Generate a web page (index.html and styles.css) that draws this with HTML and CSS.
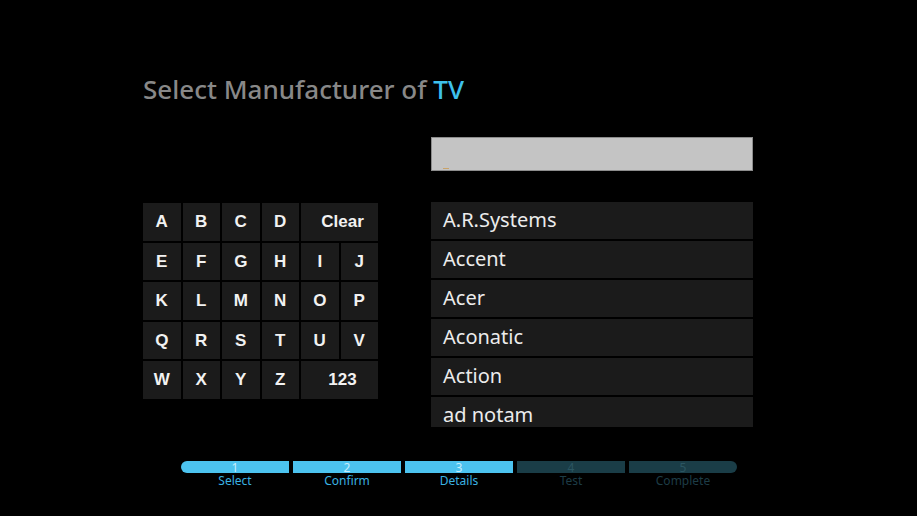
FILE: index.html
```html
<!DOCTYPE html>
<html>
<head>
<meta charset="utf-8">
<link rel="stylesheet" href="styles.css">
</head>
<body>
<div class="screen">
  <h1 class="title">Select Manufacturer of <span class="accent">TV</span></h1>
  <div class="main">
    <div class="keyboard">
      <div class="key">A</div><div class="key">B</div><div class="key">C</div><div class="key">D</div><div class="key wide">Clear</div>
      <div class="key">E</div><div class="key">F</div><div class="key">G</div><div class="key">H</div><div class="key">I</div><div class="key">J</div>
      <div class="key">K</div><div class="key">L</div><div class="key">M</div><div class="key">N</div><div class="key">O</div><div class="key">P</div>
      <div class="key">Q</div><div class="key">R</div><div class="key">S</div><div class="key">T</div><div class="key">U</div><div class="key">V</div>
      <div class="key">W</div><div class="key">X</div><div class="key">Y</div><div class="key">Z</div><div class="key wide">123</div>
    </div>
    <div class="right">
      <div class="search"><span class="caret"></span></div>
      <div class="list">
        <div class="item">A.R.Systems</div>
        <div class="item">Accent</div>
        <div class="item">Acer</div>
        <div class="item">Aconatic</div>
        <div class="item">Action</div>
        <div class="item">ad notam</div>
      </div>
    </div>
  </div>
  <div class="steps">
    <div class="step done first"><div class="bar">1</div><div class="label">Select</div></div>
    <div class="step done"><div class="bar">2</div><div class="label">Confirm</div></div>
    <div class="step done"><div class="bar">3</div><div class="label">Details</div></div>
    <div class="step"><div class="bar">4</div><div class="label">Test</div></div>
    <div class="step last"><div class="bar">5</div><div class="label">Complete</div></div>
  </div>
</div>
</body>
</html>
```

FILE: styles.css
```css
html, body {
  margin: 0;
  padding: 0;
  background: #000;
}
.screen {
  width: 917px;
  height: 516px;
  box-sizing: border-box;
  padding: 70px 0 0 143px;
  font-family: "Noto Sans", "Open Sans", sans-serif;
  overflow: hidden;
}
.title {
  margin: 0;
  font-size: 26px;
  line-height: 38px;
  font-weight: 500;
  color: #888888;
  height: 38px;
}
.accent {
  color: #3ec0ec;
}
.main {
  display: flex;
  align-items: flex-start;
  margin-top: 29px;
}
.keyboard {
  display: grid;
  grid-template-columns: repeat(6, 37.5px);
  grid-auto-rows: 37.5px;
  gap: 2px;
  margin-top: 66px;
  font-family: "Liberation Sans", Arial, sans-serif;
  font-weight: bold;
  font-size: 17px;
  color: #f2f2f2;
}
.key {
  background: #1b1b1b;
  display: flex;
  align-items: center;
  justify-content: center;
  padding-top: 1px;
}
.key.wide {
  grid-column: span 2;
  padding-left: 6px;
}
.right {
  margin-left: 53px;
  width: 322px;
}
.search {
  height: 32px;
  background: #c4c4c4;
  border: 1px solid #8c8c8c;
  position: relative;
}
.caret {
  position: absolute;
  left: 11px;
  bottom: 1px;
  width: 6px;
  height: 1px;
  background: #c9a36a;
}
.list {
  margin-top: 31px;
  height: 225px;
  overflow: hidden;
  display: flex;
  flex-direction: column;
  gap: 2px;
}
.item {
  flex: none;
  height: 37px;
  background: #1b1b1b;
  color: #ececec;
  font-size: 20px;
  line-height: 35px;
  padding-left: 12px;
}
.steps {
  display: flex;
  gap: 4px;
  margin: 34px 0 0 38px;
  width: 556px;
}
.step {
  width: 108px;
  text-align: center;
}
.bar {
  height: 12px;
  background: #1a3d47;
  color: #2b5561;
  font-size: 12px;
  line-height: 13px;
}
.step.done .bar {
  background: #4cc3ef;
  color: #c8eefc;
}
.step.first .bar {
  border-radius: 6px 0 0 6px;
}
.step.last .bar {
  border-radius: 0 6px 6px 0;
}
.label {
  margin-top: 1px;
  font-size: 12px;
  line-height: 13px;
  color: #1d3c46;
}
.step.done .label {
  color: #3ab2e2;
}
```
